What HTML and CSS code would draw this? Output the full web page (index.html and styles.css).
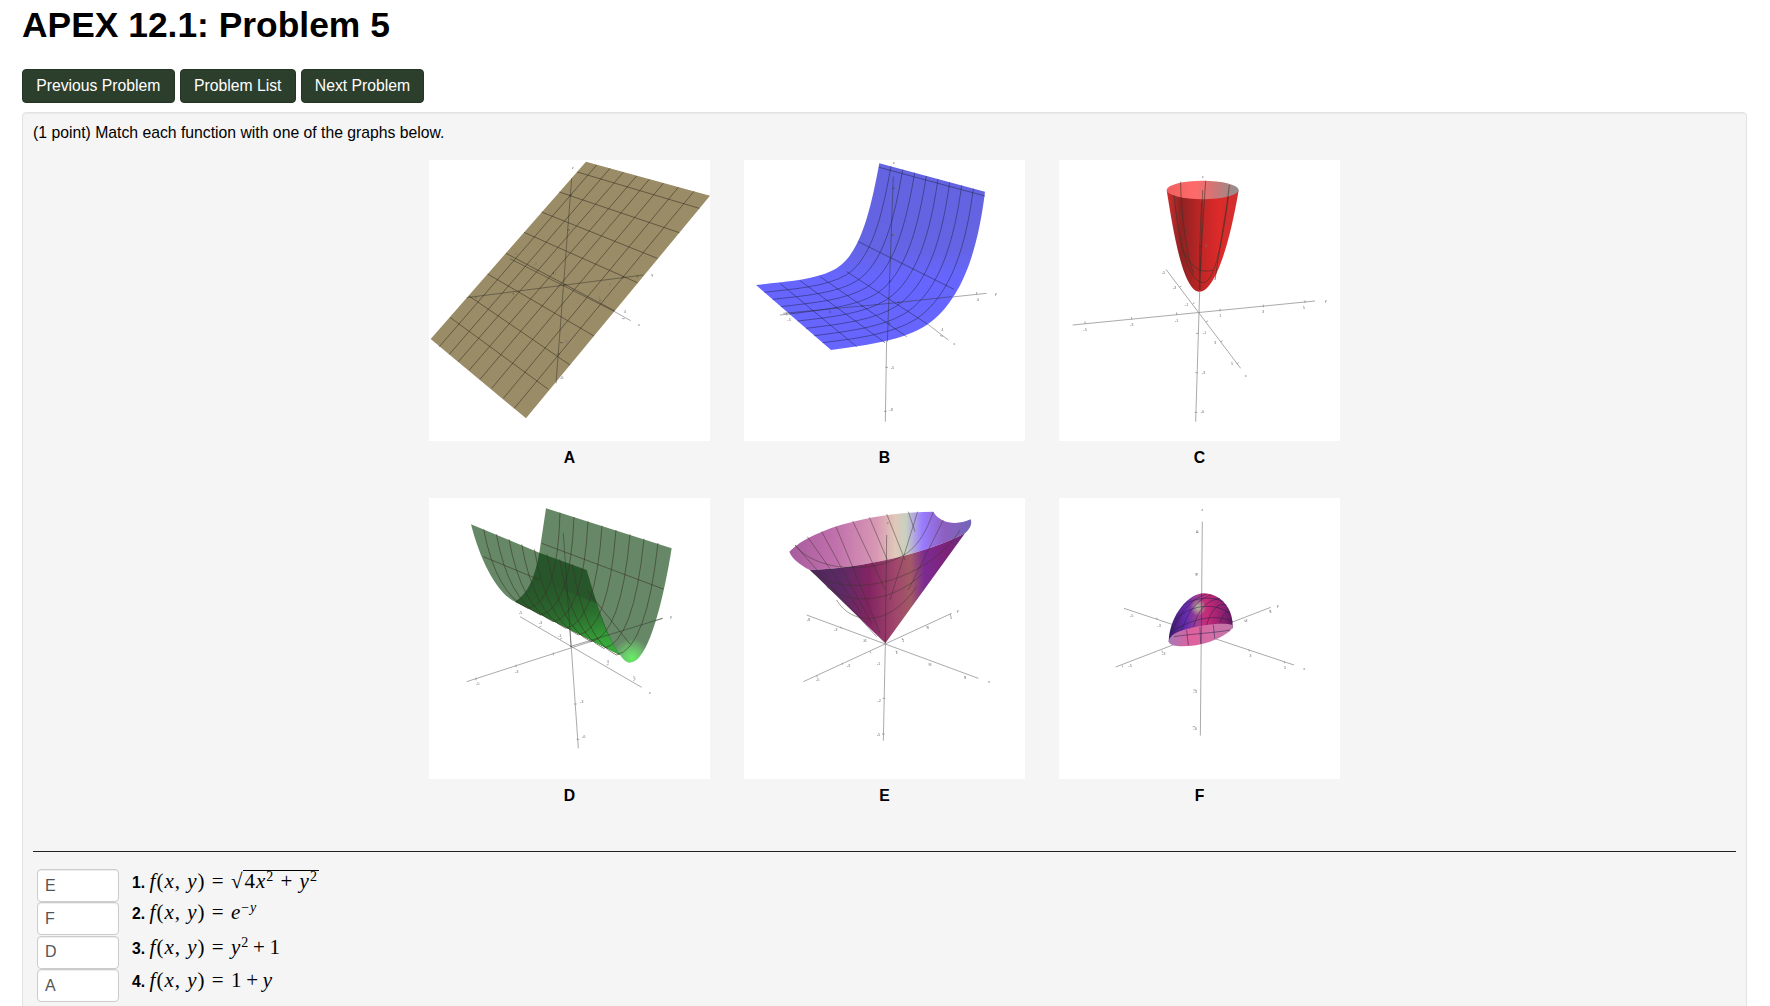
FILE: index.html
```html
<!DOCTYPE html>
<html lang="en">
<head>
<meta charset="utf-8">
<title>APEX 12.1: Problem 5</title>
<link rel="stylesheet" href="styles.css">
</head>
<body>
<div class="page">
  <h1 class="title">APEX 12.1: Problem 5</h1>
  <nav class="nav">
    <a class="btn">Previous Problem</a>
    <a class="btn">Problem List</a>
    <a class="btn">Next Problem</a>
  </nav>
  <main class="panel">
    <p class="intro">(1 point) Match each function with one of the graphs below.</p>
    <div class="graphs">
      <figure class="graph">
        <div class="plot">
          <svg viewBox="27 30 843 843">
            <polygon points="498,35 870,137 318,805 32,567" fill="#9a8c66"/>
            <g class="grid">
              <path d="M472 66L838 175M418 126L778 248M365 186L712 325M312 247L652 398M258 310L585 483M203 372L522 558M147 438L450 645M90 502L385 718"/>
              <path d="M530 45L58 590M570 55L88 613M610 67L115 635M650 78L148 660M688 88L180 688M730 100L215 715M775 112L250 745M822 124L283 775"/>
            </g>
            <g class="axis-on fine">
              <path d="M455 85L408 700M140 443L670 375M270 326L582 484"/>
              <path d="M448 135h8M442 240h8M432 404h8M420 578h8M412 612h8M168 440v6M280 428v6M400 366v6M540 448v6M608 380v6M652 376v6"/>
            </g>
            <path class="axis" d="M582 484L632 512M606 506h8"/>
            <g class="tick"><text x="455" y="57">z</text><text x="694" y="377">y</text><text x="654" y="528">x</text><text x="611" y="488">4</text><text x="464" y="124">6</text><text x="455" y="243">3</text><text x="420" y="686">-6</text><text x="432" y="580">-3</text><text x="282" y="314">-5</text><text x="340" y="344">-3</text><text x="398" y="376">-1</text><text x="534" y="446">3</text><text x="566" y="408">3</text></g>
          </svg>
        </div>
        <figcaption class="cap">A</figcaption>
      </figure>
      <figure class="graph">
        <div class="plot">
          <svg viewBox="42 30 843 843">
            <defs>
              <linearGradient id="bShade" x1="0" y1="0" x2="0" y2="1">
                <stop offset="0" stop-color="#6464e0"/><stop offset=".45" stop-color="#6464e4"/><stop offset=".62" stop-color="#6666ff"/><stop offset="1" stop-color="#6666ff"/>
              </linearGradient>
            </defs>
            <path class="axis" d="M150 495L770 430M470 560L466 815M590 520L655 570M740 426v8M466 652h8M462 784h8M630 556l8 4M170 488v8"/>
            <path fill="url(#bShade)" d="M448 40L765 125C745 290 700 450 590 525C520 570 420 585 303 600L78 405C170 395 260 390 320 355C390 310 420 190 448 40Z"/>
            <g class="grid fine">
              <path d="M483 49C456 201 424 326 350 374C289 410 198 416 103 427M518 59C492 212 459 341 380 393C318 430 226 437 128 448M554 68C528 223 493 357 410 412C347 450 253 458 153 470M589 78C564 234 528 372 440 431C376 470 281 479 178 492M624 87C601 246 562 388 470 449C404 490 309 501 203 513M659 97C637 257 597 403 500 468C433 510 337 522 228 535M695 106C673 268 631 419 530 487C462 530 364 543 253 557M730 116C709 279 666 434 560 506C491 550 392 564 278 578"/>
              <path d="M447 52L765 138M385 275L672 418M350 365L592 522M270 380L530 560M210 392L465 578M150 400L380 590"/>
            </g>
            <path class="axis-on fine" d="M490 80L472 575M160 490L480 460L665 440M486 115h8M483 255h8M476 394h8M474 520h8M300 490v-8M396 472v-6M506 460v-6"/>
            <g class="tick"><text x="488" y="43">z</text><text x="794" y="434">y</text><text x="670" y="586">x</text><text x="172" y="513">-5</text><text x="482" y="658">-5</text><text x="478" y="782">-8</text><text x="498" y="116">6</text><text x="490" y="258">3</text><text x="740" y="454">4</text><text x="634" y="543">4</text></g>
          </svg>
        </div>
        <figcaption class="cap">B</figcaption>
      </figure>
      <figure class="graph">
        <div class="plot">
          <svg viewBox="27 30 843 843">
            <defs>
              <linearGradient id="cOut" x1="0" y1="0" x2="1" y2="0">
                <stop offset="0" stop-color="#d03030"/><stop offset=".2" stop-color="#8e2222"/><stop offset=".5" stop-color="#c42626"/><stop offset=".72" stop-color="#dc2a2a"/><stop offset="1" stop-color="#d23030"/>
              </linearGradient>
              <linearGradient id="cIn" x1="0" y1="0" x2="1" y2="0">
                <stop offset="0" stop-color="#f06060"/><stop offset=".4" stop-color="#ff6a6a"/><stop offset=".7" stop-color="#c87878"/><stop offset="1" stop-color="#8f8f8f"/>
              </linearGradient>
            </defs>
            <path class="axis" d="M68 525L795 453M348 358L572 655M449 425L437 815M105 514v8M245 501v8M380 487v8M510 476v8M640 464v8M765 451v8M388 412l6 -4M428 462l6 -4M468 516l6 -4M512 576l6 -4M560 642l6 -4M434 787h8M436 668h8M438 550h8"/>
            <path fill="url(#cOut)" d="M350 120C370 250 400 425 448 425C500 425 545 250 566 120Z"/>
            <ellipse cx="458" cy="120" rx="108" ry="28" fill="url(#cIn)"/>
            <g class="grid">
              <path d="M372 135C385 260 410 395 460 398C495 398 520 260 535 140M392 95C392 180 410 320 430 370M467 92L460 200L450 370M538 105C530 180 510 280 495 390M455 155C450 240 448 330 448 420M400 300C420 350 450 372 490 360"/>
            </g>
            <path class="axis-on fine" d="M458 120L450 420M448 290h8"/>
            <g class="tick"><text x="455" y="84">z</text><text x="824" y="457">y</text><text x="584" y="681">x</text><text x="100" y="542">-5</text><text x="240" y="528">-3</text><text x="374" y="516">-1</text><text x="508" y="502">1</text><text x="636" y="490">3</text><text x="758" y="478">5</text><text x="335" y="373">-5</text><text x="368" y="418">-3</text><text x="404" y="468">-1</text><text x="492" y="582">3</text><text x="543" y="646">5</text><text x="458" y="552">-1</text><text x="455" y="672">-3</text><text x="452" y="788">-6</text><text x="464" y="292">3</text></g>
          </svg>
        </div>
        <figcaption class="cap">C</figcaption>
      </figure>
      <figure class="graph">
        <div class="plot">
          <svg viewBox="27 24 843 843">
            <defs>
              <linearGradient id="dFloor" x1="0" y1="0" x2=".35" y2="1">
                <stop offset="0" stop-color="#27562a" stop-opacity="0"/><stop offset=".6" stop-color="#2c7a2f" stop-opacity=".7"/><stop offset="1" stop-color="#37a83a"/>
              </linearGradient>
              <radialGradient id="dTip" gradientUnits="userSpaceOnUse" cx="635" cy="505" r="60">
                <stop offset="0" stop-color="#66ee66"/><stop offset=".5" stop-color="#6cc06c"/><stop offset="1" stop-color="#668866"/>
              </radialGradient>
            </defs>
            <path class="axis" d="M300 380L665 592M140 575L728 385M430 130L475 775M168 563v8M288 524v8M400 488v8M358 412l6 -4M420 448l6 -4M560 526l6 -4M640 572l6 -4M462 642h8M470 748h8"/>
            <path fill="url(#dTip)" d="M153 103L358 188L378 55L755 175C735 300 690 518 630 518C615 518 605 500 600 495L285 335C230 310 180 210 153 103Z"/>
            <path fill="#27562a" d="M358 188L500 240C530 340 560 440 600 495L285 335C325 310 345 260 358 188Z"/>
            <path fill="url(#dFloor)" d="M358 270L530 340C550 410 575 460 600 495L285 335C310 320 340 300 358 270Z"/>
            <g class="grid">
              <path d="M420 68Q413 337 323 355M462 81Q451 357 361 375M504 94Q489 377 399 395M546 107Q527 397 437 415M588 120Q565 417 475 435M630 133Q603 437 513 455M672 146Q641 457 551 475M714 159Q679 477 589 495"/>
              <path d="M191 118Q228 310 323 355M229 133Q266 330 361 375M267 148Q304 350 399 395M305 163Q342 370 437 415M343 178Q380 390 475 435M381 193Q418 410 513 455M419 208Q456 430 551 475M457 223Q494 450 589 495"/>
              <path d="M365 160L730 297M190 200L360 270M500 300L630 462"/>
            </g>
            <path class="axis-on fine" d="M430 130L453 470M450 470L728 385"/>
            <g class="tick"><text x="422" y="103">z</text><text x="750" y="384">y</text><text x="686" y="611">x</text><text x="168" y="585">-5</text><text x="285" y="548">-3</text><text x="296" y="372">-5</text><text x="356" y="403">-3</text><text x="414" y="440">-1</text><text x="560" y="520">3</text><text x="640" y="566">5</text><text x="480" y="638">-3</text><text x="486" y="744">-6</text></g>
          </svg>
        </div>
        <figcaption class="cap">D</figcaption>
      </figure>
      <figure class="graph">
        <div class="plot">
          <svg viewBox="42 24 843 843">
            <defs>
              <linearGradient id="eIn" gradientUnits="userSpaceOnUse" x1="178" y1="0" x2="725" y2="0">
                <stop offset="0" stop-color="#a85c9e"/><stop offset=".25" stop-color="#c070ac"/><stop offset=".48" stop-color="#d898b4"/><stop offset=".58" stop-color="#e0c8b8"/><stop offset=".64" stop-color="#c8d0c0"/><stop offset=".73" stop-color="#9a7cff"/><stop offset=".85" stop-color="#8d5fc0"/><stop offset="1" stop-color="#7266b8"/>
              </linearGradient>
              <linearGradient id="eOut" gradientUnits="userSpaceOnUse" x1="240" y1="0" x2="705" y2="0">
                <stop offset="0" stop-color="#4e2658"/><stop offset=".2" stop-color="#5c2a66"/><stop offset=".38" stop-color="#832462"/><stop offset=".55" stop-color="#a0466c"/><stop offset=".65" stop-color="#a25a66"/><stop offset=".74" stop-color="#7c2a92"/><stop offset=".88" stop-color="#7d2278"/><stop offset="1" stop-color="#6a2c80"/>
              </linearGradient>
            </defs>
            <path class="axis" d="M230 375L745 565M665 370L220 575M466 460L460 752M332 410l2 6M402 448l2 6M498 482l2 6M596 520l2 6M704 558l2 6M660 372l2 6M590 408l2 6M516 444l2 6M420 484l2 6M336 518l2 6M260 556l2 6M458 625h8M456 732h8"/>
            <path fill="url(#eIn)" d="M178 185C250 110 450 65 610 65C630 100 680 108 722 88C727 100 722 115 705 130C590 190 400 235 240 240C210 225 185 205 178 185Z"/>
            <path fill="url(#eOut)" d="M240 240C400 235 590 190 705 130L466 460Z"/>
            <g class="grid thin">
              <path d="M195 165L340 330L440 440M232 140L395 370M275 125L425 400M318 110L450 430M368 93L466 300M418 82L472 210M470 72L525 210M535 65L555 125M563 65L480 330M640 90L535 300"/>
              <path d="M195 165C250 240 420 260 530 190C570 160 590 120 610 66M240 240C300 300 450 310 590 220C620 200 660 170 690 120M320 330C360 400 470 420 560 290M290 290C350 340 470 350 580 250"/>
            </g>
            <path class="axis-on fine" d="M470 135L466 460"/>
            <g class="tick"><text x="680" y="366">y</text><text x="774" y="580">x</text><text x="660" y="386">5</text><text x="590" y="418">3</text><text x="516" y="455">1</text><text x="598" y="528">3</text><text x="702" y="568">5</text><text x="497" y="491">1</text><text x="230" y="392">-8</text><text x="312" y="424">-3</text><text x="400" y="456">-1</text><text x="350" y="530">-3</text><text x="258" y="574">-5</text><text x="440" y="525">-1</text><text x="442" y="635">-2</text><text x="440" y="738">-5</text><text x="470" y="102">z</text></g>
          </svg>
        </div>
        <figcaption class="cap">E</figcaption>
      </figure>
      <figure class="graph">
        <div class="plot">
          <svg viewBox="27 24 843 843">
            <defs>
              <linearGradient id="fDome" gradientUnits="userSpaceOnUse" x1="356" y1="0" x2="548" y2="0">
                <stop offset="0" stop-color="#3c1a66"/><stop offset=".28" stop-color="#6a2cb0"/><stop offset=".45" stop-color="#a04090"/><stop offset=".6" stop-color="#c82a76"/><stop offset=".85" stop-color="#8d2070"/><stop offset="1" stop-color="#5e1a5e"/>
              </linearGradient>
              <linearGradient id="fBase" gradientUnits="userSpaceOnUse" x1="356" y1="0" x2="548" y2="0">
                <stop offset="0" stop-color="#a878b8"/><stop offset=".35" stop-color="#e0609c"/><stop offset=".7" stop-color="#d070a8"/><stop offset="1" stop-color="#c078a8"/>
              </linearGradient>
              <radialGradient id="fGlow">
                <stop offset="0" stop-color="#b8c0a0"/><stop offset="1" stop-color="#b8c0a0" stop-opacity="0"/>
              </radialGradient>
            </defs>
            <path class="axis" d="M222 355L732 525M662 352L197 531M457 95L451 737M320 383l2 6M596 478l2 6M702 514l2 6M336 482l2 6M216 526l2 6M660 360l2 6M584 390l2 6M438 127h8M436 252h8M430 600h8M428 710h8"/>
            <path fill="url(#fDome)" d="M356 455C360 370 420 310 460 310C515 310 552 360 548 415L480 440L370 450Z"/>
            <ellipse cx="445" cy="352" rx="24" ry="26" fill="url(#fGlow)"/>
            <path fill="url(#fBase)" d="M356 455C358 440 370 430 400 420C450 405 520 395 548 405C552 420 520 440 480 455C430 472 360 475 356 455Z"/>
            <g class="grid fine">
              <path d="M360 435C400 345 440 320 470 312M395 420C420 350 450 325 485 315M430 410C445 360 470 330 510 325M470 405C480 370 500 335 530 345M510 398C520 370 530 360 540 370"/>
              <path d="M375 390C420 345 490 335 540 370M360 430C420 385 500 370 548 395M400 345C440 320 490 320 520 335M410 420L415 465M450 412L452 462M490 404L494 446M372 440C420 432 500 428 540 420"/>
            </g>
            <path class="axis-on fine" d="M455 310L454 460"/>
            <g class="tick"><text x="454" y="64">z</text><text x="680" y="350">y</text><text x="760" y="540">x</text><text x="240" y="382">-5</text><text x="322" y="410">-3</text><text x="336" y="494">-3</text><text x="235" y="532">-5</text><text x="430" y="608">-3</text><text x="430" y="720">-6</text><text x="438" y="130">6</text><text x="436" y="258">3</text><text x="658" y="368">5</text><text x="586" y="396">3</text><text x="598" y="500">3</text><text x="702" y="536">5</text></g>
          </svg>
        </div>
        <figcaption class="cap">F</figcaption>
      </figure>
    </div>
    <hr class="rule">
    <div class="answers">
      <div class="answer">
        <input class="ans-input" type="text" value="E">
        <div class="eq"><b class="num">1.</b> <span class="math"><i>f</i>(<i>x</i>, <i>y</i>) = <span class="root"><span class="rad">√</span><span class="radicand">4<i>x</i><sup>2</sup> + <i>y</i><sup>2</sup></span></span></span></div>
      </div>
      <div class="answer">
        <input class="ans-input" type="text" value="F">
        <div class="eq eq-raised"><b class="num">2.</b> <span class="math"><i>f</i>(<i>x</i>, <i>y</i>) = <i>e</i><sup>−<i>y</i></sup></span></div>
      </div>
      <div class="answer">
        <input class="ans-input" type="text" value="D">
        <div class="eq eq-mid"><b class="num">3.</b> <span class="math"><i>f</i>(<i>x</i>, <i>y</i>) = <span class="tight"><i>y</i><sup>2</sup> + 1</span></span></div>
      </div>
      <div class="answer">
        <input class="ans-input" type="text" value="A">
        <div class="eq eq-mid"><b class="num">4.</b> <span class="math"><i>f</i>(<i>x</i>, <i>y</i>) = <span class="tight">1 + <i>y</i></span></span></div>
      </div>
    </div>
  </main>
</div>
</body>
</html>
```
FILE: styles.css
```css
html, body { margin: 0; height: 1006px; overflow: hidden; background: #fff; }
body { font-family: "Liberation Sans", Arial, sans-serif; font-size: 15.75px; color: #000; }
.page { padding: 0 23px 0 22px; }
.title { margin: 7px 0 0; font-size: 35.4px; line-height: 36px; font-weight: bold; }
.nav { display: flex; gap: 5px; margin-top: 26px; }
.btn { display: block; height: 34px; box-sizing: border-box; padding: 0 13.2px; line-height: 32px; color: #fff; background: #2c3e2c; border: 1px solid #253525; border-radius: 4px; }
.panel { margin-top: 9px; padding: 0 10px 20px; background: #f5f5f5; border: 1px solid #e3e3e3; border-radius: 4px; box-shadow: inset 0 1px 1px rgba(0,0,0,.05); }
.intro { margin: 0; padding-top: 9px; line-height: 22px; }
.graphs { display: grid; grid-template-columns: repeat(3, 281px); column-gap: 34px; justify-content: center; margin-top: 16px; }
.graph { margin: 0; height: 338px; }
.plot { width: 281px; height: 281px; background: #fff; overflow: hidden; }
.plot svg { display: block; width: 281px; height: 281px; filter: blur(.4px); }
.cap { padding-top: 1px; text-align: center; font-weight: bold; line-height: 32px; }
.grid path { fill: none; stroke: #3a3328; stroke-opacity: .8; stroke-width: 2.2; }
.grid.fine path { stroke: #22224a; stroke-width: 1.9; }
.grid.thin path { stroke-opacity: .7; stroke-width: 2; }
.axis { fill: none; stroke: #8a8a8a; stroke-width: 2.2; }
.axis-on { fill: none; stroke: #2a2a2a; stroke-opacity: .8; stroke-width: 2.4; }
.axis-on.fine, .axis-on.fine path { stroke-width: 1.8; stroke-opacity: .75; }
.tick text { font-family: "Liberation Sans", sans-serif; font-size: 12px; fill: #777; }
.rule { margin: 15px 0 17px; border: 0; border-top: 1px solid #222; }
.answers { display: flex; flex-direction: column; }
.answer { display: flex; height: 33.4px; align-items: flex-start; }
.ans-input { box-sizing: border-box; width: 82px; height: 33px; margin-left: 4px; padding: 0 7px; font: 16px "Liberation Sans", Arial, sans-serif; color: #555; background: #fff; border: 1px solid #ccc; border-radius: 4px; box-shadow: inset 0 1px 1px rgba(0,0,0,.075); }
.eq { margin-left: 13px; line-height: 24px; white-space: nowrap; }
.eq-raised { margin-top: -2px; }
.eq-mid { margin-top: -1px; }
.num { font-size: 15.75px; }
.math { font-family: "Liberation Serif", "Times New Roman", serif; font-size: 21px; letter-spacing: 1px; }
.math sup { font-size: 14px; line-height: 0; vertical-align: 7px; }
.tight { word-spacing: -2.5px; }
.root { display: inline-flex; align-items: flex-end; }
.rad { line-height: 22px; }
.radicand { border-top: 1px solid #000; line-height: 21px; padding: 0 1px; }
```
